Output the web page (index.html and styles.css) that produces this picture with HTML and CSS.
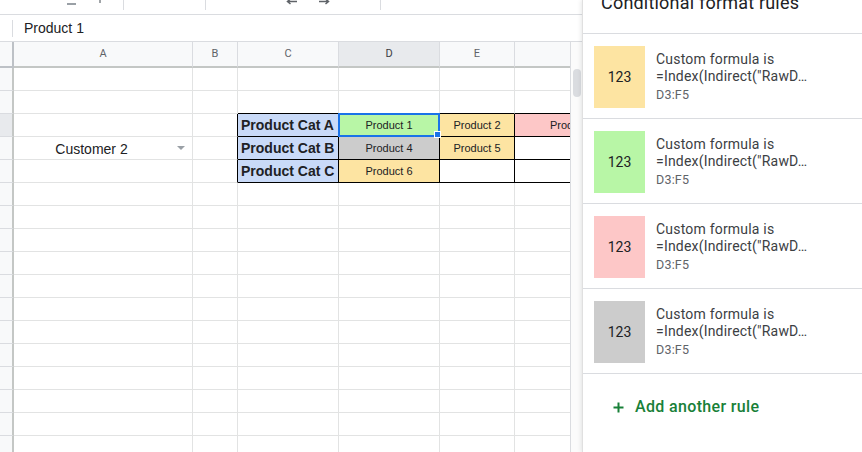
FILE: index.html
```html
<!DOCTYPE html>
<html lang="en">
<head>
  <meta charset="UTF-8">
  <meta name="viewport" content="width=device-width, initial-scale=1.0">
  <title>Conditional format rules</title>
  <link rel="stylesheet" href="styles.css">
</head>
<body>
  <div class="app">
    <div class="workspace">
      <!-- Toolbar (scrolled, only the bottom edge shows) -->
      <div class="toolbar">
        <svg class="tb-text" width="10" height="6" viewBox="0 0 10 6"><rect x="0" y="3" width="9" height="2" fill="#9aa0a6"/></svg>
        <svg class="tb-tick" width="6" height="5" viewBox="0 0 6 5"><path d="M3 0V3" stroke="#80868b" stroke-width="1.5"/></svg>
        <span class="tb-sep first"></span>
        <span class="tb-sep second"></span>
        <svg class="tb-arrow left" width="12" height="6" viewBox="0 0 12 6"><path d="M11 1.5H2M4.5 -1L1.5 1.5L4.5 4" fill="none" stroke="#5f6368" stroke-width="1.5"/></svg>
        <svg class="tb-arrow right" width="12" height="6" viewBox="0 0 12 6"><path d="M1 1.5H10M7.5 -1L10.5 1.5L7.5 4" fill="none" stroke="#5f6368" stroke-width="1.5"/></svg>
        <span class="tb-sep third"></span>
      </div>

      <div class="formula-bar">
        <span class="fx-divider"></span>
        <span class="fx-value">Product 1</span>
      </div>

      <div class="sheet-area">
        <div class="sheet">
          <div class="row head">
            <div class="rh corner"></div>
            <div>A</div>
            <div>B</div>
            <div>C</div>
            <div class="selected">D</div>
            <div>E</div>
            <div></div>
          </div>
          <div class="row"><div class="rh"></div><div></div><div></div><div></div><div></div><div></div><div></div></div>
          <div class="row"><div class="rh"></div><div></div><div></div><div class="above"></div><div class="above"></div><div class="above"></div><div class="above"></div></div>
          <div class="row">
            <div class="rh selected"></div>
            <div></div>
            <div class="left-of"></div>
            <div class="t label">Product Cat A</div>
            <div class="t prod green active">Product 1<span class="fill-handle"></span></div>
            <div class="t prod yellow">Product 2</div>
            <div class="t prod pink">Product 3</div>
          </div>
          <div class="row">
            <div class="rh"></div>
            <div class="dropdown"><span class="dd-text">Customer 2</span><span class="dd-arrow"></span></div>
            <div class="left-of"></div>
            <div class="t label">Product Cat B</div>
            <div class="t prod gray">Product 4</div>
            <div class="t prod yellow">Product 5</div>
            <div class="t"></div>
          </div>
          <div class="row">
            <div class="rh"></div>
            <div></div>
            <div class="left-of"></div>
            <div class="t label">Product Cat C</div>
            <div class="t prod yellow">Product 6</div>
            <div class="t"></div>
            <div class="t"></div>
          </div>
          <div class="row"><div class="rh"></div><div></div><div></div><div></div><div></div><div></div><div></div></div>
          <div class="row"><div class="rh"></div><div></div><div></div><div></div><div></div><div></div><div></div></div>
          <div class="row"><div class="rh"></div><div></div><div></div><div></div><div></div><div></div><div></div></div>
          <div class="row"><div class="rh"></div><div></div><div></div><div></div><div></div><div></div><div></div></div>
          <div class="row"><div class="rh"></div><div></div><div></div><div></div><div></div><div></div><div></div></div>
          <div class="row"><div class="rh"></div><div></div><div></div><div></div><div></div><div></div><div></div></div>
          <div class="row"><div class="rh"></div><div></div><div></div><div></div><div></div><div></div><div></div></div>
          <div class="row"><div class="rh"></div><div></div><div></div><div></div><div></div><div></div><div></div></div>
          <div class="row"><div class="rh"></div><div></div><div></div><div></div><div></div><div></div><div></div></div>
          <div class="row"><div class="rh"></div><div></div><div></div><div></div><div></div><div></div><div></div></div>
          <div class="row"><div class="rh"></div><div></div><div></div><div></div><div></div><div></div><div></div></div>
          <div class="row"><div class="rh"></div><div></div><div></div><div></div><div></div><div></div><div></div></div>
        </div>
        <div class="vscroll"><div class="thumb"></div></div>
      </div>
    </div>

    <!-- Conditional formatting side panel -->
    <aside class="cf-panel">
      <div class="cf-header"><h2>Conditional format rules</h2></div>

      <div class="rule">
        <div class="swatch yellow">123</div>
        <div class="rule-text">
          <div>Custom formula is</div>
          <div>=Index(Indirect("RawD…</div>
          <div class="rule-range">D3:F5</div>
        </div>
      </div>

      <div class="rule">
        <div class="swatch green">123</div>
        <div class="rule-text">
          <div>Custom formula is</div>
          <div>=Index(Indirect("RawD…</div>
          <div class="rule-range">D3:F5</div>
        </div>
      </div>

      <div class="rule">
        <div class="swatch pink">123</div>
        <div class="rule-text">
          <div>Custom formula is</div>
          <div>=Index(Indirect("RawD…</div>
          <div class="rule-range">D3:F5</div>
        </div>
      </div>

      <div class="rule">
        <div class="swatch gray">123</div>
        <div class="rule-text">
          <div>Custom formula is</div>
          <div>=Index(Indirect("RawD…</div>
          <div class="rule-range">D3:F5</div>
        </div>
      </div>

      <div class="add-rule">
        <svg width="11" height="11" viewBox="0 0 11 11"><path d="M5.5 0.5V10.5M0.5 5.5H10.5" stroke="#188038" stroke-width="2"/></svg>
        <span>Add another rule</span>
      </div>
    </aside>
  </div>
</body>
</html>
```

FILE: styles.css
```css
* {
  box-sizing: border-box;
}

body {
  margin: 0;
  font-family: "Liberation Sans", Arial, sans-serif;
  color: #202124;
  background: #fff;
}

.app {
  display: flex;
  width: 862px;
  height: 452px;
  overflow: hidden;
}

.workspace {
  width: 582px;
  flex: none;
  display: flex;
  flex-direction: column;
}

/* toolbar */
.toolbar {
  height: 15px;
  border-bottom: 1px solid #dadce0;
  display: flex;
  align-items: flex-start;
  overflow: hidden;
}

.tb-text {
  margin-left: 67px;
}

.tb-tick {
  margin-left: 20px;
}

.tb-sep {
  width: 1px;
  height: 10px;
  background: #dadce0;
}

.tb-sep.first {
  margin-left: 20px;
}

.tb-sep.second {
  margin-left: 81px;
}

.tb-sep.third {
  margin-left: 50px;
}

.tb-arrow.left {
  margin-left: 80px;
}

.tb-arrow.right {
  margin-left: 20px;
}

/* formula bar */
.formula-bar {
  height: 27px;
  border-bottom: 1px solid #dadce0;
  display: flex;
  align-items: center;
}

.fx-divider {
  margin-left: 12px;
  width: 1px;
  height: 17px;
  background: #dadce0;
}

.fx-value {
  margin-left: 11px;
  font-size: 14px;
}

/* grid */
.sheet-area {
  flex: 1;
  display: flex;
  overflow: hidden;
}

.sheet {
  width: 570px;
  flex: none;
  overflow: hidden;
}

.row {
  display: grid;
  grid-template-columns: 14px 179px 45px 101px 101px 75px 118px;
  height: 23px;
}

.row > div {
  border-right: 1px solid #e2e3e3;
  border-bottom: 1px solid #e2e3e3;
  min-width: 0;
}

.row .rh {
  background: #f8f9fa;
  border-right: 2px solid #c4c7c5;
  border-bottom-color: #dadce0;
}

.row .rh.selected {
  background: #e8eaed;
}

.head {
  height: 26px;
}

.head > div {
  background: #f8f9fa;
  border-right-color: #dadce0;
  border-bottom: 2px solid #c4c7c5;
  font-family: Roboto, sans-serif;
  font-size: 11px;
  line-height: 24px;
  text-align: center;
  color: #5f6368;
}

.head > div.selected {
  background: #e8eaed;
  color: #3c4043;
}

.head .corner {
  border-bottom-color: #bdc1c6;
  border-right-color: #bdc1c6;
}

.row > .above {
  border-bottom-color: #000;
}

.row > .left-of {
  border-right-color: #000;
}

.row > .t {
  border-right-color: #000;
  border-bottom-color: #000;
}

.label {
  background: #c9daf8;
  font-weight: bold;
  font-size: 14px;
  line-height: 23px;
  padding-left: 3px;
  white-space: nowrap;
  overflow: hidden;
}

.prod {
  font-size: 11px;
  line-height: 22px;
  text-align: center;
  white-space: nowrap;
}

.yellow {
  background: #fde4a2;
}

.green {
  background: #b8f6a6;
}

.pink {
  background: #fdc7c7;
}

.gray {
  background: #cccccc;
}

.active {
  position: relative;
}

.active::after {
  content: "";
  position: absolute;
  top: -1px;
  left: -1px;
  right: -1px;
  bottom: -1px;
  border: 2px solid #1a73e8;
}

.fill-handle {
  position: absolute;
  right: -2px;
  bottom: -2px;
  width: 7px;
  height: 7px;
  background: #1a73e8;
  border: 1px solid #fff;
  z-index: 1;
}

.dropdown {
  display: flex;
  align-items: center;
  padding-top: 2px;
  font-size: 14px;
  line-height: 20px;
}

.dd-text {
  flex: 1;
  text-align: center;
}

.dd-arrow {
  margin-left: 8px;
  margin-right: 7px;
  margin-top: -3px;
  border-left: 4px solid transparent;
  border-right: 4px solid transparent;
  border-top: 4px solid #9aa0a6;
}

.vscroll {
  width: 12px;
  flex: none;
  border-left: 1px solid #dadce0;
  background: #fbfbfb;
  padding-top: 27px;
  padding-left: 2px;
}

.thumb {
  width: 8px;
  height: 28px;
  border-radius: 4px;
  background: #dadce0;
}

/* side panel */
.cf-panel {
  width: 280px;
  flex: none;
  border-left: 1px solid #e0e0e0;
  box-shadow: -1px 0 4px rgba(60, 64, 67, 0.12);
  background: #fff;
  font-family: Roboto, "Liberation Sans", sans-serif;
}

.cf-header {
  height: 34px;
  border-bottom: 1px solid #dadce0;
  padding-left: 18px;
  overflow: hidden;
}

.cf-header h2 {
  margin: -9px 0 0;
  font-size: 18px;
  line-height: 24px;
  font-weight: 400;
  letter-spacing: 0.2px;
  color: #202124;
  white-space: nowrap;
}

.rule {
  display: flex;
  align-items: flex-start;
  height: 85px;
  padding: 12px 0 10px 11px;
  border-bottom: 1px solid #dadce0;
}

.swatch {
  width: 51px;
  height: 62px;
  flex: none;
  display: flex;
  align-items: center;
  justify-content: center;
  font-size: 14px;
  color: #202124;
}

.rule-text {
  margin-left: 11px;
  margin-top: 5px;
  font-size: 14px;
  line-height: 17px;
  letter-spacing: 0.2px;
  color: #3c4043;
  white-space: nowrap;
}

.rule-text .rule-range {
  margin-top: 1px;
  font-size: 12.5px;
  line-height: 18px;
  color: #5f6368;
}

.add-rule {
  display: flex;
  align-items: center;
  padding: 23px 0 0 30px;
  color: #188038;
  font-size: 16px;
  font-weight: 500;
  line-height: 20px;
  letter-spacing: 0.35px;
}

.add-rule svg {
  margin-right: 11px;
}
```
